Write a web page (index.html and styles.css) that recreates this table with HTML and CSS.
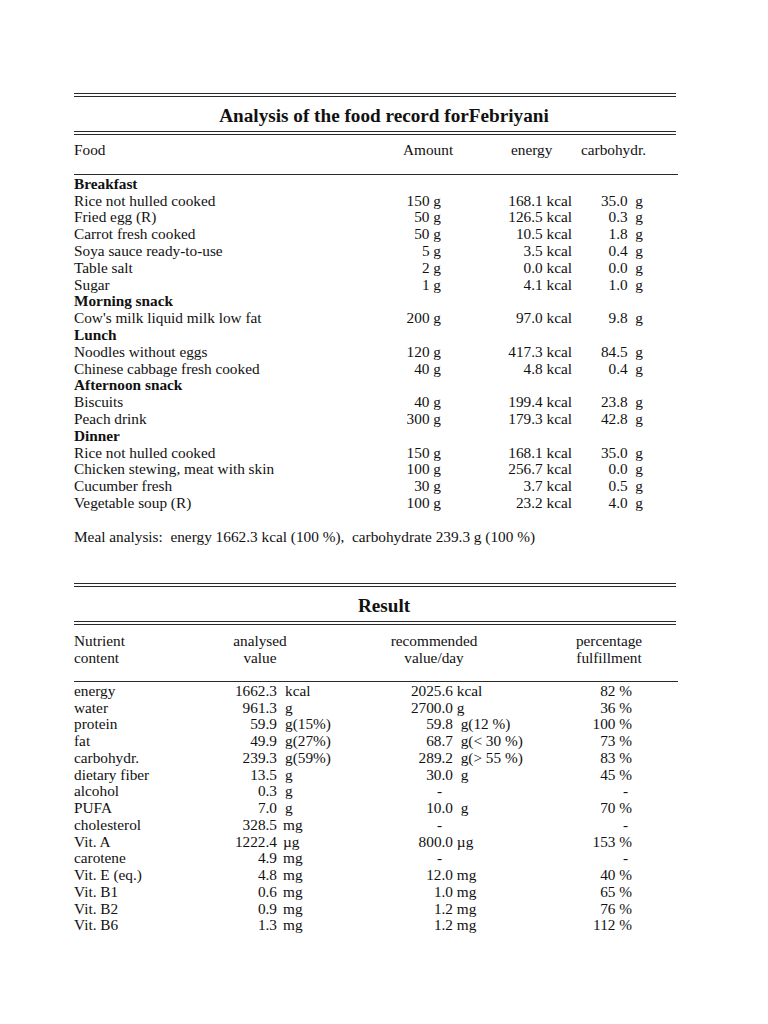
FILE: index.html
```html
<!DOCTYPE html>
<html lang="en">
<head>
<meta charset="utf-8">
<title>Analysis of the food record</title>
<link rel="stylesheet" href="styles.css">
</head>
<body>
<div class="page">
  <div class="dbl first"></div>
  <h1 class="title">Analysis of the food record forFebriyani</h1>
  <div class="dbl"></div>

  <div class="food-head">
    <span>Food</span><span>Amount</span><span>energy</span><span>carbohydr.</span>
  </div>
  <div class="solid"></div>

  <div class="food">
    <div class="meal">Breakfast</div>
    <div class="row"><span>Rice not hulled cooked</span><span>150 g</span><span>168.1 kcal</span><span>35.0  g</span></div>
    <div class="row"><span>Fried egg (R)</span><span>50 g</span><span>126.5 kcal</span><span>0.3  g</span></div>
    <div class="row"><span>Carrot fresh cooked</span><span>50 g</span><span>10.5 kcal</span><span>1.8  g</span></div>
    <div class="row"><span>Soya sauce ready-to-use</span><span>5 g</span><span>3.5 kcal</span><span>0.4  g</span></div>
    <div class="row"><span>Table salt</span><span>2 g</span><span>0.0 kcal</span><span>0.0  g</span></div>
    <div class="row"><span>Sugar</span><span>1 g</span><span>4.1 kcal</span><span>1.0  g</span></div>
    <div class="meal">Morning snack</div>
    <div class="row"><span>Cow's milk liquid milk low fat</span><span>200 g</span><span>97.0 kcal</span><span>9.8  g</span></div>
    <div class="meal">Lunch</div>
    <div class="row"><span>Noodles without eggs</span><span>120 g</span><span>417.3 kcal</span><span>84.5  g</span></div>
    <div class="row"><span>Chinese cabbage fresh cooked</span><span>40 g</span><span>4.8 kcal</span><span>0.4  g</span></div>
    <div class="meal">Afternoon snack</div>
    <div class="row"><span>Biscuits</span><span>40 g</span><span>199.4 kcal</span><span>23.8  g</span></div>
    <div class="row"><span>Peach drink</span><span>300 g</span><span>179.3 kcal</span><span>42.8  g</span></div>
    <div class="meal">Dinner</div>
    <div class="row"><span>Rice not hulled cooked</span><span>150 g</span><span>168.1 kcal</span><span>35.0  g</span></div>
    <div class="row"><span>Chicken stewing, meat with skin</span><span>100 g</span><span>256.7 kcal</span><span>0.0  g</span></div>
    <div class="row"><span>Cucumber fresh</span><span>30 g</span><span>3.7 kcal</span><span>0.5  g</span></div>
    <div class="row"><span>Vegetable soup (R)</span><span>100 g</span><span>23.2 kcal</span><span>4.0  g</span></div>
  </div>

  <p class="summary">Meal analysis:  energy 1662.3 kcal (100 %),  carbohydrate 239.3 g (100 %)</p>

  <div class="dbl second"></div>
  <h1 class="title">Result</h1>
  <div class="dbl"></div>

  <div class="res-head">
    <span>Nutrient<br>content</span>
    <span>analysed<br>value</span>
    <span>recommended<br>value/day</span>
    <span>percentage<br>fulfillment</span>
  </div>
  <div class="solid"></div>

  <div class="result">
    <div class="rrow"><span>energy</span><span class="n">1662.3</span><span class="au">kcal</span><span class="n">2025.6</span><span class="u"> kcal</span><span class="p">82 %</span></div>
    <div class="rrow"><span>water</span><span class="n">961.3</span><span class="au">g</span><span class="n">2700.0</span><span class="u"> g</span><span class="p">36 %</span></div>
    <div class="rrow"><span>protein</span><span class="n">59.9</span><span class="au">g(15%)</span><span class="n">59.8</span><span class="u">  g(12 %)</span><span class="p">100 %</span></div>
    <div class="rrow"><span>fat</span><span class="n">49.9</span><span class="au">g(27%)</span><span class="n">68.7</span><span class="u">  g(&lt; 30 %)</span><span class="p">73 %</span></div>
    <div class="rrow"><span>carbohydr.</span><span class="n">239.3</span><span class="au">g(59%)</span><span class="n">289.2</span><span class="u">  g(&gt; 55 %)</span><span class="p">83 %</span></div>
    <div class="rrow"><span>dietary fiber</span><span class="n">13.5</span><span class="au">g</span><span class="n">30.0</span><span class="u">  g</span><span class="p">45 %</span></div>
    <div class="rrow"><span>alcohol</span><span class="n">0.3</span><span class="au">g</span><span class="n dash">-</span><span class="u"></span><span class="p dash">-</span></div>
    <div class="rrow"><span>PUFA</span><span class="n">7.0</span><span class="au">g</span><span class="n">10.0</span><span class="u">  g</span><span class="p">70 %</span></div>
    <div class="rrow"><span>cholesterol</span><span class="n">328.5</span><span class="au m">mg</span><span class="n dash">-</span><span class="u"></span><span class="p dash">-</span></div>
    <div class="rrow"><span>Vit. A</span><span class="n">1222.4</span><span class="au m">µg</span><span class="n">800.0</span><span class="u"> µg</span><span class="p">153 %</span></div>
    <div class="rrow"><span>carotene</span><span class="n">4.9</span><span class="au m">mg</span><span class="n dash">-</span><span class="u"></span><span class="p dash">-</span></div>
    <div class="rrow"><span>Vit. E (eq.)</span><span class="n">4.8</span><span class="au m">mg</span><span class="n">12.0</span><span class="u"> mg</span><span class="p">40 %</span></div>
    <div class="rrow"><span>Vit. B1</span><span class="n">0.6</span><span class="au m">mg</span><span class="n">1.0</span><span class="u"> mg</span><span class="p">65 %</span></div>
    <div class="rrow"><span>Vit. B2</span><span class="n">0.9</span><span class="au m">mg</span><span class="n">1.2</span><span class="u"> mg</span><span class="p">76 %</span></div>
    <div class="rrow"><span>Vit. B6</span><span class="n">1.3</span><span class="au m">mg</span><span class="n">1.2</span><span class="u"> mg</span><span class="p">112 %</span></div>
  </div>
</div>
</body>
</html>
```

FILE: styles.css
```css
html, body {
  margin: 0;
  padding: 0;
  background: #ffffff;
}

body {
  color: #111111;
  font-family: "Liberation Serif", "Times New Roman", serif;
  font-size: 15.3px;
  line-height: 16.8px;
}

.page {
  width: 604px;
  margin-left: 74px;
  padding-top: 93px;
  padding-bottom: 60px;
}

.dbl {
  width: 602px;
  height: 0;
  border-top: 4px double #2a2a2a;
}

.dbl.second {
  margin-top: 38px;
}

.title {
  margin: 8px 0 4px;
  padding-left: 16px;
  font-size: 19.2px;
  line-height: 22px;
  font-weight: bold;
  text-align: center;
}

.solid {
  width: 604px;
  height: 0;
  border-top: 1px solid #2a2a2a;
}

.food-head {
  display: grid;
  grid-template-columns: 329px 108px 70px auto;
  margin-top: 7px;
  padding-bottom: 15px;
}

.food {
  margin-top: 1px;
}

.meal {
  font-weight: bold;
}

.row {
  display: grid;
  grid-template-columns: 300px 67px 131px 71px;
  white-space: pre;
}

.row span:nth-child(n+2) {
  text-align: right;
}

.summary {
  margin: 16.8px 0 0;
  white-space: pre;
}

.res-head {
  display: grid;
  grid-template-columns: 136px 100px 248px 102px;
  margin-top: 8px;
  padding-bottom: 14px;
}

.res-head span:nth-child(n+2) {
  text-align: center;
}

.result {
  margin-top: 1px;
}

.rrow {
  display: grid;
  grid-template-columns: 136px 67px 98px 78px 107px 72px;
  height: 16.75px;
  white-space: pre;
}

.n {
  text-align: right;
}

.n.dash {
  padding-right: 11px;
}

.au {
  padding-left: 8px;
}

.au.m {
  padding-left: 6px;
}

.p {
  text-align: right;
}

.p.dash {
  padding-right: 4px;
}
```
